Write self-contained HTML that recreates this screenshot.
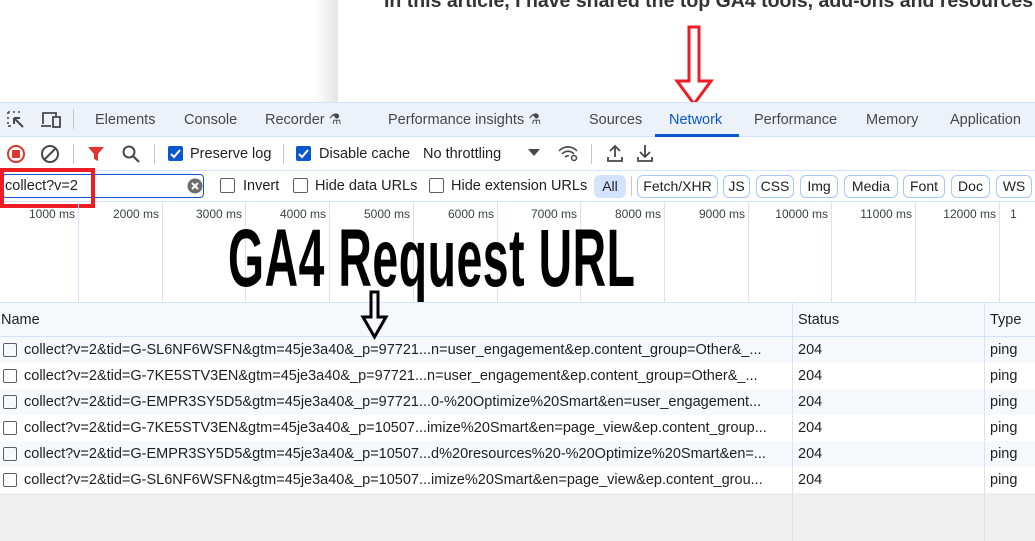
<!DOCTYPE html>
<html><head><meta charset="utf-8">
<style>
*{margin:0;padding:0;box-sizing:border-box}
body{width:1035px;height:541px;overflow:hidden;background:#fff;font-family:"Liberation Sans",sans-serif;position:relative;color:#1f1f1f}
.a{position:absolute;white-space:nowrap}
.t{font-size:14.5px;color:#474747}
.cb{position:absolute;width:15px;height:15px;border:1.6px solid #5f5f5f;border-radius:2px;background:#fff}
.cbc{position:absolute;width:15px;height:15px;border-radius:2px;background:#0b57d0}
.pill{position:absolute;top:175px;height:23px;border:1px solid #a8c7fa;border-radius:6px;font-size:14px;line-height:21px;text-align:center;color:#1f1f1f;background:#fff}
.ms{position:absolute;top:207px;font-size:12px;color:#3c4043;text-align:right;width:70px}
.vl{position:absolute;top:201px;width:1px;height:101px;background:#d3e3fd}
.row{position:absolute;left:0;width:1035px;height:26px;font-size:14.5px;line-height:26px;color:#1f1f1f}
.row .n{position:absolute;left:24px;width:765px;overflow:hidden}
.row .s{position:absolute;left:798px}
.row .ty{position:absolute;left:990px}
.row .c{position:absolute;left:3px;top:6px;width:14px;height:14px;border:1.5px solid #5f5f5f;border-radius:2px}
</style></head><body>
<div class="a" style="left:315px;top:0;width:23px;height:102px;background:linear-gradient(90deg,#fff,#e4e4e4)"></div>
<div class="a" style="left:384px;top:-10px;font-size:19.5px;font-weight:bold;color:#333">In this article, I have shared the top GA4 tools, add-ons and resources</div>
<svg class="a" style="left:672px;top:24px" width="44" height="84"><path d="M11 3 H21 V57 H33 L16 80 L-1 57 H11 Z" transform="translate(6,0)" fill="none" stroke="#ee1c24" stroke-width="3"/></svg>
<div class="a" style="left:0;top:102px;width:1035px;height:35px;background:#edf1f9;border-top:1px solid #d3e3fd;border-bottom:1px solid #d3e3fd"></div>
<svg class="a" style="left:6px;top:110px" width="20" height="20"><path d="M2 2h2M7 2h2M12 2h2M2 2v2M2 7v2M2 12v2M2 16h3" stroke="#474747" stroke-width="1.6" fill="none"/><path d="M8 8 L17 17 M8 8 h6 M8 8 v6" stroke="#474747" stroke-width="2" fill="none"/></svg>
<svg class="a" style="left:40px;top:111px" width="22" height="18"><path d="M3 13V2h13v3 M1 15h10" stroke="#474747" stroke-width="1.8" fill="none"/><rect x="13" y="6" width="7" height="10" fill="none" stroke="#474747" stroke-width="1.8"/></svg>
<div class="a" style="left:73px;top:109px;width:1px;height:20px;background:#c7c7c7"></div>
<div class="a t" style="left:95px;top:112px">Elements</div>
<div class="a t" style="left:184px;top:112px">Console</div>
<div class="a t" style="left:265px;top:112px">Recorder ⚗</div>
<div class="a t" style="left:388px;top:112px">Performance insights ⚗</div>
<div class="a t" style="left:589px;top:112px">Sources</div>
<div class="a t" style="left:669px;top:112px;color:#0b57d0">Network</div>
<div class="a" style="left:655px;top:134px;width:84px;height:3px;background:#0b57d0"></div>
<div class="a t" style="left:754px;top:112px">Performance</div>
<div class="a t" style="left:866px;top:112px">Memory</div>
<div class="a t" style="left:950px;top:112px">Application</div>
<div class="a" style="left:0;top:170px;width:1035px;height:1px;background:#d3e3fd"></div>
<svg class="a" style="left:6px;top:144px" width="20" height="20"><circle cx="10" cy="10" r="8" fill="none" stroke="#dc362e" stroke-width="2"/><rect x="6" y="6" width="8" height="8" rx="1" fill="#dc362e"/></svg>
<svg class="a" style="left:40px;top:144px" width="20" height="20"><circle cx="10" cy="10" r="8" fill="none" stroke="#474747" stroke-width="2"/><path d="M4 16L16 4" stroke="#474747" stroke-width="2"/></svg>
<div class="a" style="left:73px;top:144px;width:1px;height:20px;background:#c7c7c7"></div>
<svg class="a" style="left:87px;top:145px" width="18" height="18"><path d="M1 2h16l-6 7v7l-4-2v-5z" fill="#dc362e"/></svg>
<svg class="a" style="left:121px;top:144px" width="20" height="20"><circle cx="8" cy="8" r="5.5" fill="none" stroke="#474747" stroke-width="2"/><path d="M12 12l6 6" stroke="#474747" stroke-width="2.2"/></svg>
<div class="a" style="left:154px;top:144px;width:1px;height:20px;background:#c7c7c7"></div>
<div class="cbc" style="left:168px;top:146px"></div><svg class="a" style="left:168px;top:146px" width="15" height="15"><path d="M3 8l3 3 6-7" stroke="#fff" stroke-width="2" fill="none"/></svg>
<div class="a t" style="left:190px;top:146px;color:#1f1f1f">Preserve log</div>
<div class="a" style="left:283px;top:144px;width:1px;height:20px;background:#c7c7c7"></div>
<div class="cbc" style="left:296px;top:146px"></div><svg class="a" style="left:296px;top:146px" width="15" height="15"><path d="M3 8l3 3 6-7" stroke="#fff" stroke-width="2" fill="none"/></svg>
<div class="a t" style="left:319px;top:146px;color:#1f1f1f">Disable cache</div>
<div class="a t" style="left:423px;top:146px;color:#1f1f1f">No throttling</div>
<svg class="a" style="left:528px;top:149px" width="12" height="8"><path d="M0 0h12L6 7z" fill="#474747"/></svg>
<svg class="a" style="left:557px;top:143px" width="22" height="20"><path d="M2 8a12 12 0 0 1 18 0M5 11a8 8 0 0 1 12 0M8 14a4 4 0 0 1 4-1" stroke="#474747" stroke-width="1.6" fill="none"/><circle cx="17" cy="15" r="2.5" fill="none" stroke="#474747" stroke-width="1.5"/></svg>
<div class="a" style="left:591px;top:144px;width:1px;height:20px;background:#c7c7c7"></div>
<svg class="a" style="left:605px;top:143px" width="20" height="20"><path d="M10 14V3M5 8l5-5 5 5M3 14v4h14v-4" stroke="#474747" stroke-width="1.8" fill="none"/></svg>
<svg class="a" style="left:635px;top:143px" width="20" height="20"><path d="M10 2v12M5 9l5 5 5-5M3 14v4h14v-4" stroke="#474747" stroke-width="1.8" fill="none"/></svg>
<div class="a" style="left:0;top:201px;width:1035px;height:1px;background:#d3e3fd"></div>
<div class="a" style="left:2px;top:174px;width:202px;height:24px;border:1px solid #0b57d0;border-radius:4px"></div>
<div class="a" style="left:5px;top:178px;font-size:14.5px;color:#1f1f1f">collect?v=2</div>
<svg class="a" style="left:187px;top:178px" width="16" height="16"><circle cx="8" cy="8" r="7.5" fill="#6d6d6d"/><path d="M5 5l6 6M11 5l-6 6" stroke="#fff" stroke-width="2"/></svg>
<div class="a" style="left:0;top:168px;width:95px;height:40px;border:4px solid #ee1c24"></div>
<div class="cb" style="left:220px;top:178px"></div><div class="a t" style="left:243px;top:178px;color:#1f1f1f">Invert</div>
<div class="cb" style="left:293px;top:178px"></div><div class="a t" style="left:315px;top:178px;color:#1f1f1f">Hide data URLs</div>
<div class="cb" style="left:429px;top:178px"></div><div class="a t" style="left:451px;top:178px;color:#1f1f1f">Hide extension URLs</div>
<div class="pill" style="left:594px;width:32px;border-color:#d3e3fd;background:#d3e3fd">All</div>
<div class="a" style="left:631px;top:176px;width:1px;height:20px;background:#c7c7c7"></div>
<div class="pill" style="left:637px;width:81px">Fetch/XHR</div>
<div class="pill" style="left:723px;width:27px">JS</div>
<div class="pill" style="left:756px;width:38px">CSS</div>
<div class="pill" style="left:800px;width:38px">Img</div>
<div class="pill" style="left:844px;width:54px">Media</div>
<div class="pill" style="left:903px;width:42px">Font</div>
<div class="pill" style="left:951px;width:39px">Doc</div>
<div class="pill" style="left:996px;width:36px">WS</div>
<div class="vl" style="left:78px"></div><div class="vl" style="left:162px"></div><div class="vl" style="left:245px"></div><div class="vl" style="left:329px"></div><div class="vl" style="left:413px"></div><div class="vl" style="left:497px"></div><div class="vl" style="left:580px"></div><div class="vl" style="left:664px"></div><div class="vl" style="left:748px"></div><div class="vl" style="left:831px"></div><div class="vl" style="left:915px"></div><div class="vl" style="left:999px"></div>
<div class="ms" style="left:5px">1000 ms</div><div class="ms" style="left:89px">2000 ms</div><div class="ms" style="left:172px">3000 ms</div><div class="ms" style="left:256px">4000 ms</div><div class="ms" style="left:340px">5000 ms</div><div class="ms" style="left:424px">6000 ms</div><div class="ms" style="left:507px">7000 ms</div><div class="ms" style="left:591px">8000 ms</div><div class="ms" style="left:675px">9000 ms</div><div class="ms" style="left:758px">10000 ms</div><div class="ms" style="left:842px">11000 ms</div><div class="ms" style="left:926px">12000 ms</div><div class="ms" style="left:1010px;text-align:left">1</div>
<div class="a" style="left:228px;top:215px;font-size:82px;font-weight:bold;color:#000;transform:scaleX(0.565);transform-origin:0 0;letter-spacing:1px;line-height:88px">GA4 Request URL</div>
<div class="a" style="left:0;top:302px;width:1035px;height:35px;background:#f7f8fc;border-top:1px solid #d3e3fd;border-bottom:1px solid #d3e3fd"></div>
<div class="a t" style="left:1px;top:312px;color:#1f1f1f">Name</div>
<div class="a t" style="left:798px;top:312px;color:#1f1f1f">Status</div>
<div class="a t" style="left:990px;top:312px;color:#1f1f1f">Type</div>
<div class="a" style="left:0;top:493px;width:1035px;height:48px;background:#f0f0f0"></div>
<div class="row" style="top:337px;background:#f7f8fc"><div class="c"></div><div class="n">collect?v=2&amp;tid=G-SL6NF6WSFN&amp;gtm=45je3a40&amp;_p=97721...n=user_engagement&amp;ep.content_group=Other&amp;_...</div><div class="s">204</div><div class="ty">ping</div></div>
<div class="row" style="top:363px;background:#fff"><div class="c"></div><div class="n">collect?v=2&amp;tid=G-7KE5STV3EN&amp;gtm=45je3a40&amp;_p=97721...n=user_engagement&amp;ep.content_group=Other&amp;_...</div><div class="s">204</div><div class="ty">ping</div></div>
<div class="row" style="top:389px;background:#f7f8fc"><div class="c"></div><div class="n">collect?v=2&amp;tid=G-EMPR3SY5D5&amp;gtm=45je3a40&amp;_p=97721...0-%20Optimize%20Smart&amp;en=user_engagement...</div><div class="s">204</div><div class="ty">ping</div></div>
<div class="row" style="top:415px;background:#fff"><div class="c"></div><div class="n">collect?v=2&amp;tid=G-7KE5STV3EN&amp;gtm=45je3a40&amp;_p=10507...imize%20Smart&amp;en=page_view&amp;ep.content_group...</div><div class="s">204</div><div class="ty">ping</div></div>
<div class="row" style="top:441px;background:#f7f8fc"><div class="c"></div><div class="n">collect?v=2&amp;tid=G-EMPR3SY5D5&amp;gtm=45je3a40&amp;_p=10507...d%20resources%20-%20Optimize%20Smart&amp;en=...</div><div class="s">204</div><div class="ty">ping</div></div>
<div class="row" style="top:467px;background:#fff"><div class="c"></div><div class="n">collect?v=2&amp;tid=G-SL6NF6WSFN&amp;gtm=45je3a40&amp;_p=10507...imize%20Smart&amp;en=page_view&amp;ep.content_grou...</div><div class="s">204</div><div class="ty">ping</div></div>
<div class="a" style="left:792px;top:302px;width:1px;height:239px;background:#d3e3fd"></div>
<div class="a" style="left:984px;top:302px;width:1px;height:239px;background:#d3e3fd"></div>
<svg class="a" style="left:360px;top:290px" width="30" height="52"><path d="M11 2h7v25h8L14.5 47 3 27h8z" fill="none" stroke="#000" stroke-width="3"/></svg>
</body></html>
